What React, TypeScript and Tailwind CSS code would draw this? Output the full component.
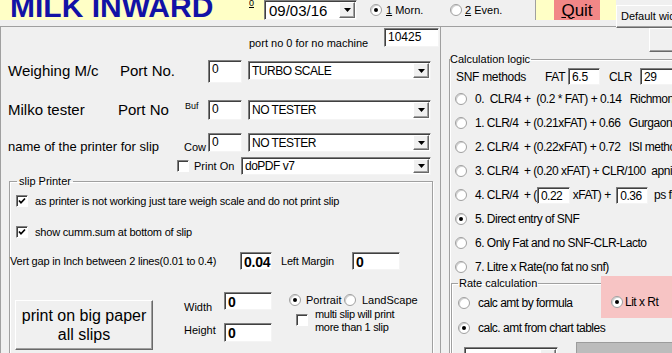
import React from 'react';

const sunken =
  'bg-white border border-t-[#808080] border-l-[#808080] border-r-[#f4f4f4] border-b-[#f4f4f4] shadow-[inset_1px_1px_0_#404040]';
const raised =
  'bg-[#f0f0f0] border border-t-white border-l-white border-r-[#696969] border-b-[#696969] shadow-[inset_-1px_-1px_0_#a0a0a0]';
const etched = 'border border-[#a0a0a0] shadow-[1px_1px_0_white,inset_1px_1px_0_white]';

function Arrow() {
  return (
    <svg width="7" height="4" viewBox="0 0 7 4">
      <path d="M0 0h7L3.5 4z" fill="black" />
    </svg>
  );
}

function DropBtn() {
  return <span className={`${raised} w-[16px] shrink-0 flex items-center justify-center`}><Arrow /></span>;
}

function Combo({ className, text }: { className: string; text: string }) {
  return (
    <div className={`${sunken} ${className} shrink-0 flex items-stretch p-[1px]`}>
      <span className="flex-1 flex items-center pl-[2px] text-[12px] tracking-[-0.5px] leading-none whitespace-nowrap">
        {text}
      </span>
      <DropBtn />
    </div>
  );
}

function Field({ className, text, bold }: { className: string; text: string; bold?: boolean }) {
  return (
    <div
      className={`${sunken} ${className} shrink-0 pl-[3px] pt-[2px] leading-none whitespace-nowrap overflow-hidden ${
        bold ? 'font-bold text-[14px]' : 'text-[12px]'
      }`}
    >
      {text}
    </div>
  );
}

function Radio({ on, className = '' }: { on?: boolean; className?: string }) {
  return (
    <span
      className={`w-[12px] h-[12px] shrink-0 rounded-full bg-white border border-[#a0a0a0] shadow-[inset_1px_1px_0_#d0d0d0] flex items-center justify-center ${className}`}
    >
      {on && <span className="w-[4px] h-[4px] rounded-full bg-black" />}
    </span>
  );
}

function Check({ on, className = '' }: { on?: boolean; className?: string }) {
  return (
    <span
      className={`w-[12px] h-[12px] shrink-0 bg-white border border-t-[#808080] border-l-[#808080] border-r-white border-b-white shadow-[inset_1px_1px_0_#404040] flex items-center justify-center ${className}`}
    >
      {on && (
        <svg width="8" height="8" viewBox="0 0 8 8">
          <path d="M1 3.5L3 5.8L7 1.5" stroke="black" strokeWidth="1.7" fill="none" />
        </svg>
      )}
    </span>
  );
}

const formulas = [
  '0.  CLR/4 +  (0.2 * FAT) + 0.14   Richmond',
  '1. CLR/4  + (0.21xFAT) + 0.66   Gurgaon',
  '2. CLR/4  + (0.22xFAT) + 0.72   ISI method',
  '3. CLR/4  + (0.20 xFAT) + CLR/100  apni',
];

function LeftPanel() {
  return (
    <div className="w-[441px] h-full shrink-0 border-l border-r border-[#a0a0a0] flex flex-col">
      <div className="flex items-start h-[21px] mt-[1px]">
        <span className="ml-[248px] w-[135px] mt-[10px] text-[11px] leading-none">port no 0 for no machine</span>
        <Field className="w-[55px] h-[19px]" text="10425" />
      </div>

      <div className="flex items-center h-[23px] mt-[11px] pl-[7px] text-[15px]">
        <span className="w-[112px]">Weighing M/c</span>
        <span className="w-[88px]">Port No.</span>
        <Field className="w-[34px] h-[23px]" text="0" />
        <Combo className="ml-[6px] w-[183px] h-[19px] self-start mt-[1px]" text="TURBO SCALE" />
      </div>

      <div className="flex items-center h-[20px] mt-[17px] pl-[7px] text-[15px]">
        <span className="w-[110px]">Milko tester</span>
        <span className="w-[66px]">Port No</span>
        <span className="w-[24px] self-start pt-[2px] pl-[1px] text-[9px] leading-none">Buf</span>
        <Field className="w-[34px] h-[20px]" text="0" />
        <Combo className="ml-[6px] w-[183px] h-[20px]" text="NO TESTER" />
      </div>

      <div className="flex items-start h-[19px] mt-[13px] pl-[7px]">
        <span className="w-[176px] mt-[7px] text-[13px] leading-none">name of the printer for slip</span>
        <span className="w-[24px] mt-[9px] text-[11px] leading-none">Cow</span>
        <Field className="w-[34px] h-[19px]" text="0" />
        <Combo className="ml-[6px] w-[183px] h-[19px]" text="NO TESTER" />
      </div>

      <div className="flex items-center h-[18px] mt-[5px]">
        <Check className="ml-[176px]" />
        <span className="ml-[5px] w-[47px] text-[11px]">Print On</span>
        <Combo className="w-[190px] h-[18px]" text="doPDF v7" />
      </div>

      <fieldset className={`${etched} ml-[8px] mt-[1px] w-[424px] h-[190px] shrink-0`}>
        <legend className="ml-[7px] px-[2px] text-[11px] leading-none">slip Printer</legend>

        <div className="flex items-center h-[12px] mt-[8px] ml-[6px] text-[11px] tracking-[-0.2px]">
          <Check on />
          <span className="ml-[7px]">as printer is not working just tare weigh scale and do not print slip</span>
        </div>
        <div className="flex items-center h-[12px] mt-[19px] ml-[6px] text-[11px] tracking-[-0.2px]">
          <Check on />
          <span className="ml-[7px]">show cumm.sum at bottom of slip</span>
        </div>

        <div className="flex items-center h-[18px] mt-[14px] text-[11px] tracking-[-0.2px]">
          <span className="w-[230px] whitespace-nowrap">Vert gap in Inch between 2 lines(0.01 to 0.4)</span>
          <Field className="w-[32px] h-[18px]" text="0.04" bold />
          <span className="ml-[9px] w-[71px]">Left Margin</span>
          <Field className="w-[48px] h-[18px]" text="0" bold />
        </div>

        <div className="flex items-start mt-[22px]">
          <div
            className={`${raised} ml-[5px] mt-[8px] w-[138px] h-[50px] flex flex-col items-center justify-center text-[16px] leading-[19px]`}
          >
            <span>print on big paper</span>
            <span>all slips</span>
          </div>
          <div className="ml-[31px] w-[40px] flex flex-col text-[11px] leading-none">
            <span className="mt-[10px]">Width</span>
            <span className="mt-[12px]">Height</span>
          </div>
          <div className="w-[48px] flex flex-col">
            <Field className="w-[48px] h-[18px]" text="0" bold />
            <Field className="w-[48px] h-[19px] mt-[13px]" text="0" bold />
          </div>
          <div className="ml-[17px] flex flex-col text-[11px]">
            <div className="flex items-center h-[12px] mt-[2px]">
              <Radio on />
              <span className="ml-[5px] w-[38px]">Portrait</span>
              <Radio />
              <span className="ml-[6px]">LandScape</span>
            </div>
            <div className="flex items-start mt-[2px]">
              <Check className="ml-[7px] mt-[6px]" />
              <span className="ml-[7px] leading-[13px] tracking-[-0.3px]">
                multi slip will print
                <br />
                more than 1 slip
              </span>
            </div>
          </div>
        </div>
      </fieldset>
    </div>
  );
}

function RightPanel() {
  const row = 'flex items-center h-[24px] whitespace-pre text-[12px] tracking-[-0.5px]';
  return (
    <div className="flex-1 h-full flex flex-col overflow-hidden">
      <div className={`${raised} ml-[208px] mt-[1px] w-[28px] h-[24px] shrink-0`} />

      <fieldset className={`${etched} ml-[8px] mt-[2px] w-[240px] shrink-0`}>
        <legend className="pr-[1px] text-[11px] leading-none">Calculation logic</legend>

        <div className="flex items-center h-[17px] mt-[3px] text-[12px] tracking-[-0.3px]">
          <span className="ml-[6px] w-[89px]">SNF methods</span>
          <span className="w-[23px]">FAT</span>
          <Field className="w-[32px] h-[17px]" text="6.5" />
          <span className="ml-[9px] w-[31px]">CLR</span>
          <Field className="w-[40px] h-[17px]" text="29" />
        </div>

        <div className="mt-[2px]">
          {formulas.map((f) => (
            <div key={f} className={row}>
              <Radio className="ml-[5px]" />
              <span className="ml-[8px]">{f}</span>
            </div>
          ))}
          <div className={row}>
            <Radio className="ml-[5px]" />
            <span className="ml-[8px]">4. CLR/4  + (</span>
            <Field className="w-[33px] h-[17px]" text="0.22" />
            <span> xFAT) +  </span>
            <Field className="w-[32px] h-[17px]" text="0.36" />
            <span>  ps flat</span>
          </div>
          <div className={row}>
            <Radio on className="ml-[5px]" />
            <span className="ml-[8px]">5. Direct entry of SNF</span>
          </div>
          <div className={row}>
            <Radio className="ml-[5px]" />
            <span className="ml-[8px]">6. Only Fat and no SNF-CLR-Lacto</span>
          </div>
          <div className={row}>
            <Radio className="ml-[5px]" />
            <span className="ml-[8px]">7. Litre x Rate(no fat no snf)</span>
          </div>
        </div>

        <fieldset className={`${etched} ml-[1px] mt-[-1px] w-[240px]`}>
          <legend className="ml-[6px] px-[1px] text-[11px] leading-none">Rate calculation</legend>
          <div className="flex items-start">
            <div className="w-[149px] shrink-0 flex flex-col whitespace-nowrap text-[12px] tracking-[-0.5px]">
              <div className="flex items-center h-[20px] mt-[4px]">
                <Radio className="ml-[6px]" />
                <span className="ml-[8px]">calc amt by formula</span>
              </div>
              <div className="flex items-center h-[20px] mt-[5px]">
                <Radio on className="ml-[6px]" />
                <span className="ml-[8px]">calc. amt from chart tables</span>
              </div>
            </div>
            <div className="mt-[-13px] w-[80px] h-[42px] shrink-0 bg-[#f7c4c4] flex items-center pt-[10px] text-[12px] tracking-[-0.5px]">
              <Radio on className="ml-[10px]" />
              <span className="ml-[2px]">Lit x Rt</span>
            </div>
          </div>
          <div className="flex items-start mt-[9px] pb-[20px]">
            <div className={`${sunken} ml-[12px] w-[94px] h-[20px] shrink-0 flex justify-end p-[1px]`}>
              <DropBtn />
            </div>
            <div className="ml-[18px] mt-[-5px] w-[100px] h-[24px] shrink-0 bg-[#bcbcbc] border-t border-l border-[#9c9c9c]" />
          </div>
        </fieldset>
      </fieldset>
    </div>
  );
}

export default function App() {
  return (
    <div className="w-[672px] h-[353px] overflow-hidden bg-[#f0f0f0] text-black font-['Liberation_Sans',Arial,sans-serif]">
      <div className="flex h-[26px] items-start">
        <div className="w-[264px] h-[20px] shrink-0 bg-[#ffffc6] flex items-start overflow-hidden">
          <span className="ml-[10px] mt-[-8px] text-[30px] leading-none font-bold text-[#1212a6] whitespace-nowrap">
            MILK INWARD
          </span>
          <span className="ml-auto mr-[10px] mt-[-1px] text-[9px] leading-none underline">0</span>
        </div>
        <div className={`${sunken} w-[93px] h-[20px] shrink-0 flex items-stretch p-[1px]`}>
          <span className="flex-1 pl-[3px] text-[15px] leading-[17px]">09/03/16</span>
          <DropBtn />
        </div>
        <div className="w-[178px] h-[20px] shrink-0 flex items-center text-[11px]">
          <Radio on className="ml-[13px]" />
          <span className="ml-[4px] w-[64px]">
            <span className="underline">1</span> Morn.
          </span>
          <Radio />
          <span className="ml-[3px]">
            <span className="underline">2</span> Even.
          </span>
        </div>
        <div className="w-[81px] h-[20px] shrink-0 bg-[#ffffc6] border-l border-[#a0a0a0]">
          <div className="ml-[18px] w-[46px] h-[20px] bg-[#f28787] flex items-center justify-center text-[17px] leading-none">
            <span className="underline">Q</span>uit
          </div>
        </div>
        <div
          className={`${raised} mt-[5px] w-[60px] h-[23px] shrink-0 flex items-center pl-[4px] text-[11px] whitespace-nowrap overflow-hidden`}
        >
          Default width
        </div>
      </div>

      <div className="flex h-[327px] border-t border-[#a0a0a0]">
        <LeftPanel />
        <RightPanel />
      </div>
    </div>
  );
}
